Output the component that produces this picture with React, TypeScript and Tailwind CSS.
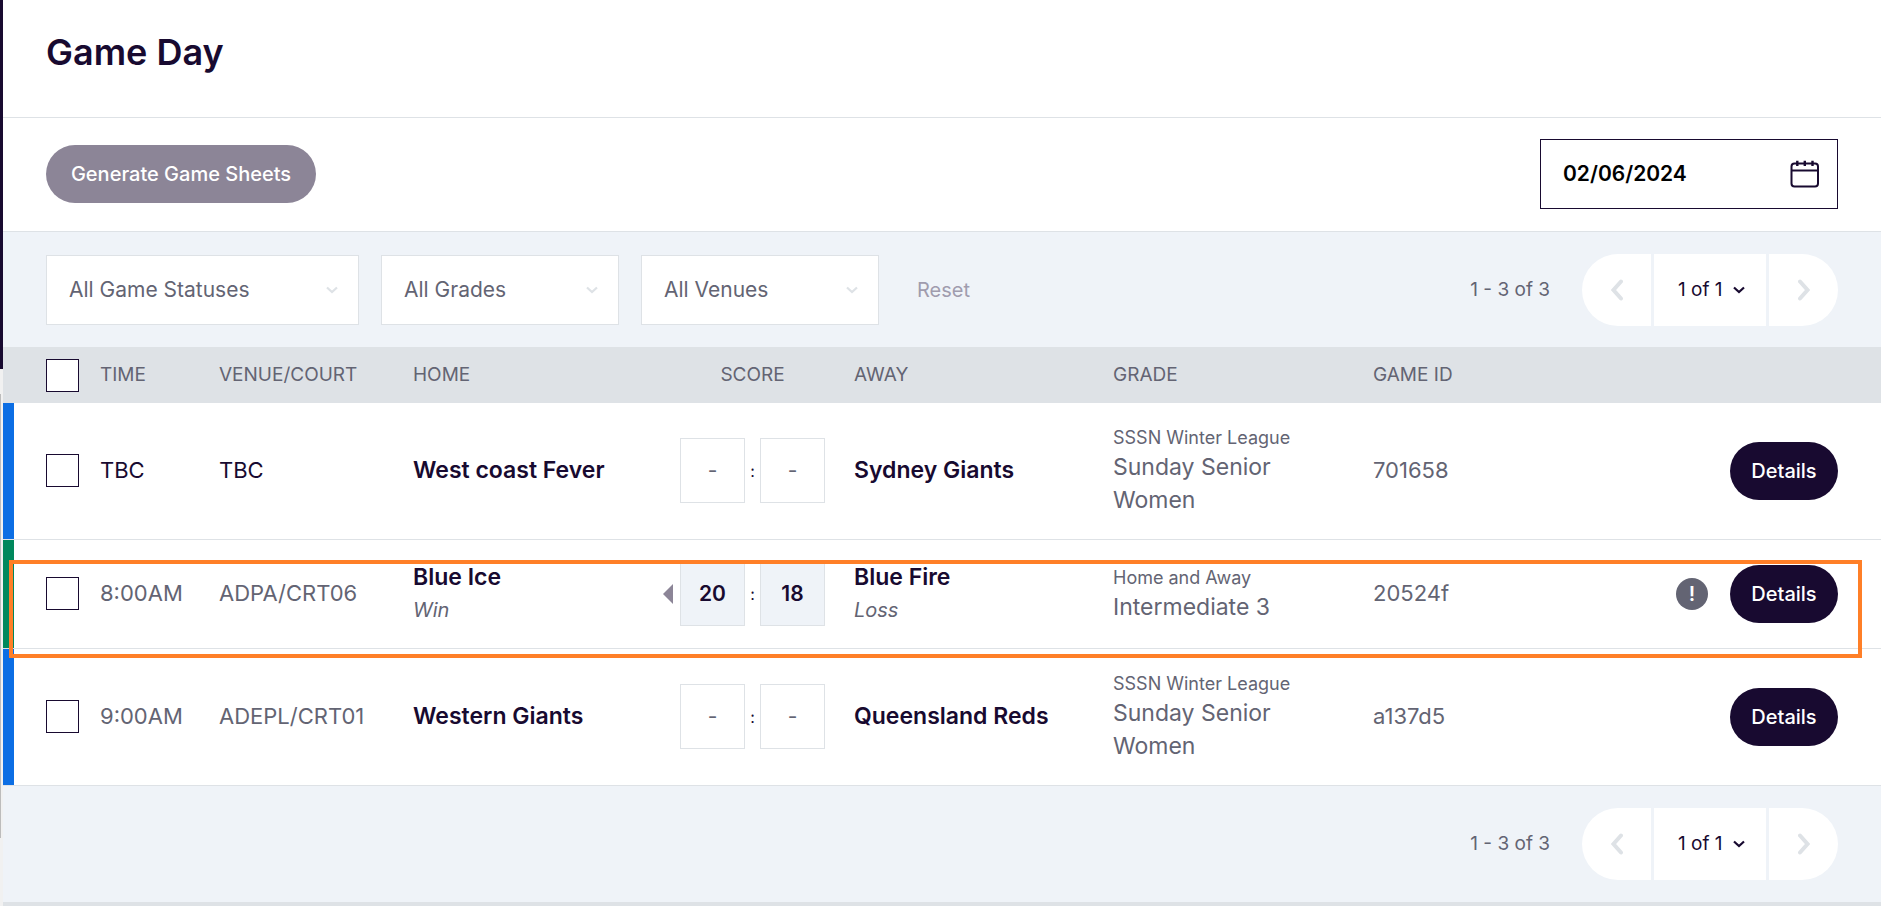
import { useState } from "react";
import clsx from "clsx";

interface Game {
  id: string;
  time: string;
  venue: string;
  scheduled: boolean;
  status: "upcoming" | "final";
  home: string;
  away: string;
  homeScore?: string;
  awayScore?: string;
  homeResult?: string;
  awayResult?: string;
  season: string;
  grade: string;
  warning?: boolean;
}

const GAMES: Game[] = [
  {
    id: "701658",
    time: "TBC",
    venue: "TBC",
    scheduled: false,
    status: "upcoming",
    home: "West coast Fever",
    away: "Sydney Giants",
    season: "SSSN Winter League",
    grade: "Sunday Senior Women",
  },
  {
    id: "20524f",
    time: "8:00AM",
    venue: "ADPA/CRT06",
    scheduled: true,
    status: "final",
    home: "Blue Ice",
    away: "Blue Fire",
    homeScore: "20",
    awayScore: "18",
    homeResult: "Win",
    awayResult: "Loss",
    season: "Home and Away",
    grade: "Intermediate 3",
    warning: true,
  },
  {
    id: "a137d5",
    time: "9:00AM",
    venue: "ADEPL/CRT01",
    scheduled: true,
    status: "upcoming",
    home: "Western Giants",
    away: "Queensland Reds",
    season: "SSSN Winter League",
    grade: "Sunday Senior Women",
  },
];

const STATUS_CLS: Record<Game["status"], string> = {
  upcoming: "bg-[#0c6ee4]",
  final: "bg-[#00885c]",
};

function ChevronDown({ className }: { className?: string }) {
  return (
    <svg viewBox="0 0 12 8" className={clsx("pointer-events-none h-2 w-3", className)} aria-hidden="true">
      <path d="M1 1.5 L6 6 L11 1.5" fill="none" stroke="currentColor" strokeWidth="2.2" />
    </svg>
  );
}

function PageArrow({ flip }: { flip?: boolean }) {
  return (
    <svg viewBox="0 0 12 22" className={clsx("h-[22px] w-3", flip && "rotate-180")} aria-hidden="true">
      <path
        d="M10 2.5 L2.5 11 L10 19.5"
        fill="none"
        stroke="currentColor"
        strokeWidth="4"
        strokeLinecap="round"
      />
    </svg>
  );
}

function CalendarIcon() {
  return (
    <svg viewBox="0 0 30 28" className="h-7 w-[30px]" fill="none" stroke="currentColor" aria-hidden="true">
      <rect x="1.5" y="3.5" width="26.5" height="23" rx="3" strokeWidth="2" />
      <path d="M2 10.5H28" strokeWidth="2" />
      <path d="M7.3 0.8V6M14.8 0.8V6M22.5 0.8V6" strokeWidth="2.4" />
    </svg>
  );
}

function Checkbox({ label }: { label: string }) {
  return (
    <input
      type="checkbox"
      aria-label={label}
      className="block size-[33px] appearance-none border border-[#180a30] bg-white checked:bg-[#180a30]"
    />
  );
}

function FilterSelect({ label, className }: { label: string; className: string }) {
  return (
    <div className={clsx("relative", className)}>
      <select
        aria-label={label}
        className="block h-[70px] w-full appearance-none border border-[#dee2e6] bg-white pr-12 pl-[22px] text-[21px]"
      >
        <option>{label}</option>
      </select>
      <ChevronDown className="absolute top-[31px] right-[21px] text-[#dee2e6]" />
    </div>
  );
}

function Pagination() {
  return (
    <div className="flex items-center gap-8">
      <span className="text-[19px]">1 - 3 of 3</span>
      <div className="flex h-[72px] gap-[3px] overflow-hidden rounded-full text-[#dee2e6]">
        <button type="button" aria-label="Previous page" className="flex w-[69px] items-center justify-center bg-white">
          <PageArrow />
        </button>
        <div className="relative">
          <select
            aria-label="Page"
            className="block h-full w-28 appearance-none bg-white pl-6 text-[19px] text-[#180a30]"
          >
            <option>1 of 1</option>
          </select>
          <ChevronDown className="absolute top-8 right-[21px] text-[#180a30]" />
        </div>
        <button type="button" aria-label="Next page" className="flex w-[69px] items-center justify-center bg-white">
          <PageArrow flip />
        </button>
      </div>
    </div>
  );
}

function ScoreInput({ label, value }: { label: string; value?: string }) {
  return (
    <input
      type="text"
      aria-label={label}
      placeholder="-"
      defaultValue={value}
      className={clsx(
        "size-[65px] border border-[#dee2e6] text-center text-[21px] font-semibold text-[#180a30] placeholder:font-normal placeholder:text-[#636473]",
        value ? "bg-[#eff3f8]" : "bg-white",
      )}
    />
  );
}

function Team({ name, result }: { name: string; result?: string }) {
  return (
    <>
      <div className="text-[23px] leading-[33px] font-semibold text-[#180a30]">{name}</div>
      {result && <div className="text-xl leading-8 italic">{result}</div>}
    </>
  );
}

function GameRow({ game }: { game: Game }) {
  const cell = "border-b border-[#dee2e6] pt-[21px] pb-[22px]";
  return (
    <tr>
      <td className={clsx("border-b border-[#dee2e6]", STATUS_CLS[game.status])} />
      <td className={clsx(cell, "pl-8")}>
        <Checkbox label={`Select game ${game.id}`} />
      </td>
      <td className={clsx(cell, !game.scheduled && "text-[#180a30]")}>{game.time}</td>
      <td className={clsx(cell, !game.scheduled && "text-[#180a30]")}>{game.venue}</td>
      <td className={cell}>
        <Team name={game.home} result={game.homeResult} />
      </td>
      <td className={cell}>
        <div className="flex items-center">
          <span className="w-[17px]">
            {game.homeResult === "Win" && (
              <svg viewBox="0 0 10 20" className="h-5 w-[10px]" aria-hidden="true">
                <path d="M10 0V20L0 10Z" fill="#8c8597" />
              </svg>
            )}
          </span>
          <ScoreInput label={`${game.home} score`} value={game.homeScore} />
          <span className="w-[15px] text-center text-base text-[#180a30]">:</span>
          <ScoreInput label={`${game.away} score`} value={game.awayScore} />
        </div>
      </td>
      <td className={cell}>
        <Team name={game.away} result={game.awayResult} />
      </td>
      <td className={clsx(cell, "pr-5")}>
        <div className="text-lg leading-[27px]">{game.season}</div>
        <div className="text-[23px] leading-[33px]">{game.grade}</div>
      </td>
      <td className={cell}>{game.id}</td>
      <td className={clsx(cell, "pr-[43px]")}>
        <div className="flex items-center justify-end gap-[22px]">
          {game.warning && (
            <span className="flex size-8 items-center justify-center rounded-full bg-[#636473] text-xl font-semibold text-white">
              !
            </span>
          )}
          <button
            type="button"
            className="h-[58px] w-[108px] rounded-full bg-[#180a30] text-xl font-medium text-white"
          >
            Details
          </button>
        </div>
      </td>
    </tr>
  );
}

export default function App() {
  const [date, setDate] = useState("02/06/2024");

  return (
    <div className="flex min-h-screen bg-[#dee2e6] font-['Inter',sans-serif] text-[#636473]">
      <div className="flex w-[3px] shrink-0 flex-col bg-[#f1f1f1]">
        <div className="h-[369px] bg-[#180a30]" />
        <div className="mt-[25px] h-[444px] w-px bg-[#bcbcbc]" />
      </div>

      <main className="min-w-0 flex-1">
        <header className="border-b border-[#dee2e6] bg-white px-[43px] pt-7 pb-[41px]">
          <h1 className="text-4xl leading-[48px] font-semibold text-[#180a30]">Game Day</h1>
        </header>

        <div className="flex items-center justify-between border-b border-[#dee2e6] bg-white px-[43px] pt-[21px] pb-[22px]">
          <button
            type="button"
            disabled
            className="h-[58px] w-[270px] rounded-full bg-[#8c8597] text-xl font-medium text-white"
          >
            Generate Game Sheets
          </button>
          <div className="flex h-[70px] w-[298px] items-center border border-[#180a30] bg-white pr-[17px] pl-[22px] text-[#180a30]">
            <input
              type="text"
              aria-label="Game date"
              value={date}
              onChange={(e) => setDate(e.target.value)}
              className="min-w-0 flex-1 text-[21px] font-semibold text-black"
            />
            <button type="button" aria-label="Open calendar">
              <CalendarIcon />
            </button>
          </div>
        </div>

        <div className="flex items-center justify-between bg-[#eff3f8] px-[43px] pt-[22px] pb-[21px]">
          <div className="flex items-center gap-[22px]">
            <FilterSelect label="All Game Statuses" className="w-[313px]" />
            <FilterSelect label="All Grades" className="w-[238px]" />
            <FilterSelect label="All Venues" className="w-[238px]" />
            <button type="button" disabled className="px-4 text-xl text-[#a09cae]">
              Reset
            </button>
          </div>
          <Pagination />
        </div>

        <div className="relative">
          <table className="w-full table-fixed border-separate border-spacing-0 bg-white text-left text-[22px]">
            <colgroup>
              <col className="w-[11px]" />
              <col className="w-[86px]" />
              <col className="w-[119px]" />
              <col className="w-[194px]" />
              <col className="w-[250px]" />
              <col className="w-[191px]" />
              <col className="w-[259px]" />
              <col className="w-[260px]" />
              <col className="w-[200px]" />
              <col />
            </colgroup>
            <thead>
              <tr className="h-14 bg-[#dee2e6] text-[19px]">
                <td />
                <td className="pl-8">
                  <Checkbox label="Select all games" />
                </td>
                <th className="font-normal">TIME</th>
                <th className="font-normal">VENUE/COURT</th>
                <th className="font-normal">HOME</th>
                <th className="pr-[29px] pl-[17px] text-center font-normal">SCORE</th>
                <th className="font-normal">AWAY</th>
                <th className="font-normal">GRADE</th>
                <th className="font-normal">GAME ID</th>
                <td />
              </tr>
            </thead>
            <tbody>
              {GAMES.map((game) => (
                <GameRow key={game.id} game={game} />
              ))}
            </tbody>
          </table>
          {/* callout around the finished game */}
          <div className="pointer-events-none absolute top-[213px] right-[19px] left-[6px] h-[98px] border-4 border-[#ff7f27]" />
        </div>

        <div className="flex justify-end bg-[#eff3f8] px-[43px] py-[22px]">
          <Pagination />
        </div>
      </main>
    </div>
  );
}
